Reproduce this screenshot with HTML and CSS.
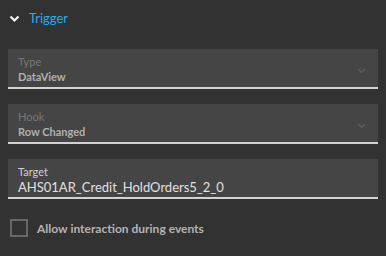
FILE: index.html
```html
<!DOCTYPE html>
<html>
<head>
<meta charset="utf-8">
<link rel="stylesheet" href="styles.css">
</head>
<body>
<div class="panel">
  <div class="header">
    <svg class="hchev" width="11" height="8" viewBox="0 0 11 8"><path d="M1.5 1.5 L5.5 5.5 L9.5 1.5" fill="none" stroke="#f2f2f2" stroke-width="2.2"/></svg>
    <span class="title">Trigger</span>
  </div>
  <div class="field disabled">
    <div class="label">Type</div>
    <div class="value">DataView</div>
    <svg class="dchev" width="9" height="6" viewBox="0 0 9 6"><path d="M1 1 L4.5 4.5 L8 1" fill="none" stroke="#5c5c5c" stroke-width="1.5"/></svg>
  </div>
  <div class="field disabled">
    <div class="label">Hook</div>
    <div class="value">Row Changed</div>
    <svg class="dchev" width="9" height="6" viewBox="0 0 9 6"><path d="M1 1 L4.5 4.5 L8 1" fill="none" stroke="#5c5c5c" stroke-width="1.5"/></svg>
  </div>
  <div class="field">
    <div class="label">Target</div>
    <div class="value big">AHS01AR_Credit_HoldOrders5_2_0</div>
  </div>
  <label class="check">
    <span class="box"></span>
    <span class="ctext">Allow interaction during events</span>
  </label>
</div>
</body>
</html>
```
FILE: styles.css
```css
html, body {
  margin: 0;
  padding: 0;
  background: #323232;
}
body {
  font-family: Lato, "Open Sans", sans-serif;
  width: 386px;
  height: 256px;
  overflow: hidden;
}
.panel {
  padding: 0 8px;
  display: flex;
  flex-direction: column;
}
.header {
  height: 36px;
  display: flex;
  align-items: center;
  gap: 9px;
  padding-left: 1px;
}
.hchev {
  display: block;
  margin-top: 1px;
}
.title {
  color: #21aef0;
  font-size: 13px;
}
.field {
  position: relative;
  margin-top: 13px;
  background: #454545;
  border-bottom: 2px solid #d2d2d2;
  padding: 6px 10px 0;
  box-sizing: content-box;
  height: 32px;
}
.field + .field {
  margin-top: 15px;
}
.label {
  font-size: 11px;
  color: #d0d0d0;
  line-height: 14px;
}
.value {
  font-size: 11px;
  font-weight: bold;
  color: #d8d8d8;
  line-height: 16px;
}
.disabled .label {
  color: #767676;
}
.disabled .value {
  color: #b0b0b0;
}
.value.big {
  font-size: 13px;
  font-weight: normal;
  color: #e0e0e0;
  line-height: 17px;
}
.dchev {
  position: absolute;
  right: 12px;
  top: 19px;
}
.check {
  display: flex;
  align-items: center;
  gap: 9px;
  margin-top: 20px;
  padding-left: 2px;
}
.box {
  width: 14px;
  height: 14px;
  border: 2px solid #666;
}
.ctext {
  font-size: 12px;
  font-weight: bold;
  color: #b4b4b4;
}
```
